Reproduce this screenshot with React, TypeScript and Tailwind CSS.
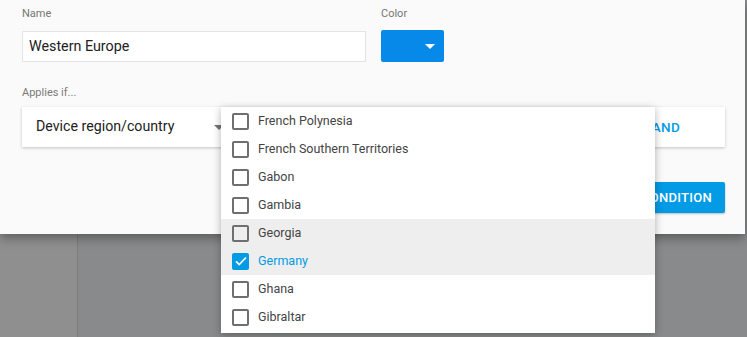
const countries = [
  { name: 'French Polynesia', checked: false, hover: false },
  { name: 'French Southern Territories', checked: false, hover: false },
  { name: 'Gabon', checked: false, hover: false },
  { name: 'Gambia', checked: false, hover: false },
  { name: 'Georgia', checked: false, hover: true },
  { name: 'Germany', checked: true, hover: true },
  { name: 'Ghana', checked: false, hover: false },
  { name: 'Gibraltar', checked: false, hover: false },
];

function Caret({ className }: { className: string }) {
  return (
    <svg width="10" height="5" viewBox="0 0 10 5" className={className}>
      <path d="M0 0 L10 0 L5 5 Z" fill="currentColor" />
    </svg>
  );
}

function Checkbox({ checked }: { checked: boolean }) {
  if (checked) {
    return (
      <span className="flex items-center justify-center w-[17px] h-[17px] rounded-[2px] bg-[#039be5]">
        <svg width="14" height="14" viewBox="0 0 24 24">
          <path d="M3.5 12.5 L9 18 L20.5 6" stroke="white" strokeWidth="3" fill="none" />
        </svg>
      </span>
    );
  }
  return <span className="w-[17px] h-[17px] rounded-[2px] border-2 border-[#6f6f6f]" />;
}

export default function App() {
  return (
    <div className="relative w-[747px] h-[337px] overflow-hidden font-['Roboto',sans-serif]">
      {/* page behind the dialog */}
      <div className="flex h-full">
        <div className="w-[78px] bg-[#8f8f8f] border-r border-[#7c7c7c]" />
        <div className="flex-1 bg-[#898a8b]" />
      </div>

      <div className="absolute top-0 left-0 w-[745px] h-[234px] bg-[#fafafa] shadow-[0_4px_10px_rgba(0,0,0,0.35)] pl-[22px] pr-[20px] pt-[7px]">
        <div className="flex gap-[15px]">
          <div className="w-[344px]">
            <div className="text-[11px] leading-[14px] text-[#757575]">Name</div>
            <div className="mt-[10px] h-[31px] bg-white border border-[#e4e4e4] flex items-center pl-[6px] text-[14.3px] text-[#212121]">
              Western Europe
            </div>
          </div>
          <div>
            <div className="text-[11px] leading-[14px] text-[#757575]">Color</div>
            <div className="mt-[9px] w-[63px] h-[32px] rounded-[2px] bg-[#0689e9] flex items-center justify-end pr-[9px]">
              <Caret className="text-white" />
            </div>
          </div>
        </div>

        <div className="mt-[24px] text-[11px] leading-[14px] text-[#7a7a7a]">Applies if...</div>

        <div className="mt-[7px] h-[40px] bg-white shadow-[0_1px_3px_rgba(0,0,0,0.22)] flex items-center pl-[14px] pr-[45px]">
          <span className="text-[14.2px] text-[#212121]">Device region/country</span>
          <Caret className="ml-[40px] text-[#757575]" />
          <span className="ml-auto text-[13.5px] font-medium tracking-[0.3px] text-[#039be5]">AND</span>
        </div>

        <div className="mt-[35px] flex justify-end">
          <div className="h-[31px] px-[13px] flex items-center bg-[#039be5] rounded-[2px] shadow-[0_1px_2px_rgba(0,0,0,0.25)] text-[13px] font-medium tracking-[0.3px] text-white">
            ADD CONDITION
          </div>
        </div>
      </div>

      {/* open dropdown menu */}
      <div className="absolute left-[221px] top-[107px] w-[434px] h-[226px] bg-white shadow-[0_2px_8px_rgba(0,0,0,0.3)]">
        {countries.map((c) => (
          <div
            key={c.name}
            className={`h-[28px] flex items-center gap-[9px] pl-[11px] ${c.hover ? 'bg-[#eeeeee]' : ''}`}
          >
            <Checkbox checked={c.checked} />
            <span className={`text-[12.5px] ${c.checked ? 'text-[#039be5]' : 'text-[#444444]'}`}>{c.name}</span>
          </div>
        ))}
      </div>
    </div>
  );
}
